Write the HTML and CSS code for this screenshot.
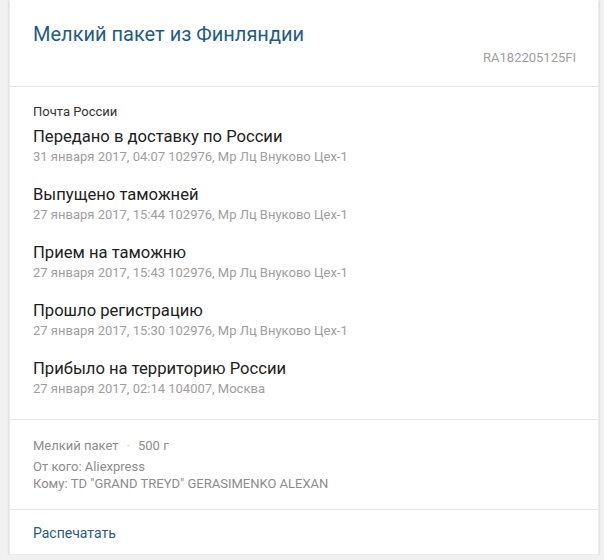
FILE: index.html
```html
<!DOCTYPE html>
<html lang="ru">
<head>
<meta charset="utf-8">
<link rel="stylesheet" href="styles.css">
</head>
<body>
<div class="card">
  <header class="head">
    <h1 class="title">Мелкий пакет из Финляндии</h1>
    <div class="track">RA182205125FI</div>
  </header>
  <section class="events">
    <div class="carrier">Почта России</div>
    <div class="event">
      <div class="ev-title">Передано в доставку по России</div>
      <div class="ev-sub">31 января 2017, 04:07 102976, Мр Лц Внуково Цех-1</div>
    </div>
    <div class="event">
      <div class="ev-title">Выпущено таможней</div>
      <div class="ev-sub">27 января 2017, 15:44 102976, Мр Лц Внуково Цех-1</div>
    </div>
    <div class="event">
      <div class="ev-title">Прием на таможню</div>
      <div class="ev-sub">27 января 2017, 15:43 102976, Мр Лц Внуково Цех-1</div>
    </div>
    <div class="event">
      <div class="ev-title">Прошло регистрацию</div>
      <div class="ev-sub">27 января 2017, 15:30 102976, Мр Лц Внуково Цех-1</div>
    </div>
    <div class="event">
      <div class="ev-title">Прибыло на территорию России</div>
      <div class="ev-sub">27 января 2017, 02:14 104007, Москва</div>
    </div>
  </section>
  <section class="info">
    <div class="info-main">Мелкий пакет<span class="dot">·</span>500 г</div>
    <div class="info-line first">От кого: Aliexpress</div>
    <div class="info-line">Кому: TD "GRAND TREYD" GERASIMENKO ALEXAN</div>
  </section>
  <footer class="foot">
    <a class="print">Распечатать</a>
  </footer>
</div>
</body>
</html>
```
FILE: styles.css
```css
html, body {
  margin: 0;
  padding: 0;
  background: #f1f1f1;
}
body {
  padding: 0 5px 0 9px;
  font-family: Roboto, "Noto Sans", sans-serif;
}
.card {
  background: #fff;
  border: 1px solid #ececec;
  border-top: none;
  box-shadow: 0 1px 2px rgba(0,0,0,0.18);
  height: 555px;
  box-sizing: border-box;
}
.head {
  padding: 20px 22px 20px 23px;
  border-bottom: 1px solid #e6e6e6;
}
.title {
  margin: 0;
  font-size: 20px;
  line-height: 28px;
  font-weight: 400;
  color: #1f5a8b;
}
.track {
  margin-top: 2px;
  text-align: right;
  font-size: 13px;
  line-height: 16px;
  color: #a0a0a0;
}
.events {
  padding: 17px 23px 21px;
  border-bottom: 1px solid #e6e6e6;
}
.carrier {
  font-size: 13px;
  line-height: 16px;
  color: #333;
  margin-bottom: 6px;
}
.event + .event {
  margin-top: 18px;
}
.ev-title {
  font-size: 16.6px;
  line-height: 22px;
  color: #212121;
}
.ev-sub {
  font-size: 13px;
  line-height: 18px;
  color: #9e9e9e;
}
.info {
  padding: 18px 23px 17px;
  border-bottom: 1px solid #e6e6e6;
  font-size: 13px;
  line-height: 16px;
  color: #8c8c8c;
}
.dot {
  color: #c4c4c4;
  margin: 0 8px;
}
.info-line {
  line-height: 17px;
}
.info-line.first {
  margin-top: 4px;
}
.foot {
  padding: 13px 23px 15px;
}
.print {
  font-size: 14px;
  line-height: 16px;
  color: #1f5a8b;
  text-decoration: none;
}
```
